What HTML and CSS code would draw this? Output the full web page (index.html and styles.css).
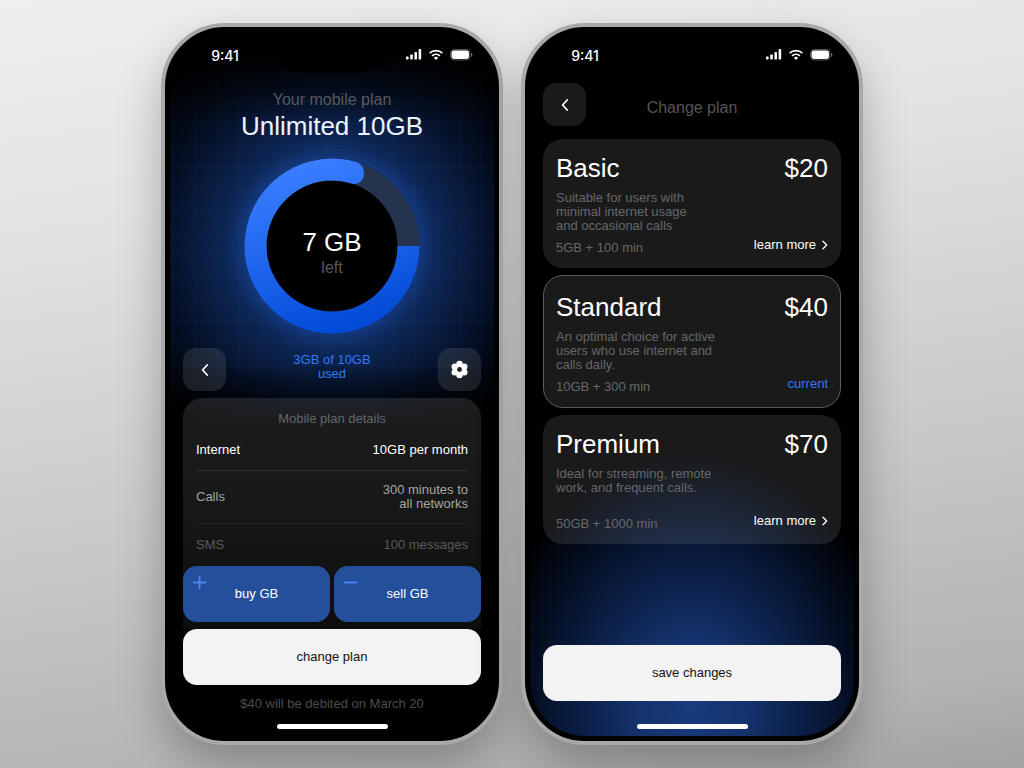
FILE: index.html
```html
<!doctype html>
<html lang="en">
<head>
    <meta charset="UTF-8">
    <meta name="viewport" content="width=device-width, initial-scale=1.0">
    <title>Mobile plan</title>
    <link rel="stylesheet" href="styles.css">
</head>
<body>

<svg class="sprite" aria-hidden="true">
    <symbol id="signal" viewBox="0 0 16 12">
        <rect x="0" y="7.500" width="2.600" height="3" rx=".8"/>
        <rect x="4.200" y="5.500" width="2.600" height="5" rx=".8"/>
        <rect x="8.400" y="3" width="2.600" height="7.500" rx=".8"/>
        <rect x="12.600" y="0" width="2.600" height="10.500" rx=".8"/>
    </symbol>
    <symbol id="wifi" viewBox="0 0 16 12">
        <path d="M1.600 4.200a9.300 9.300 0 0 1 12.800 0M4.100 6.800a5.700 5.700 0 0 1 7.800 0" fill="none" stroke="currentColor" stroke-width="1.700"/>
        <path d="M8 10.900L5.800 8.700a3.300 3.300 0 0 1 4.400 0z"/>
    </symbol>
    <symbol id="battery" viewBox="0 0 23 12">
        <rect x=".5" y=".5" width="19.500" height="10.500" rx="3.600" fill="none" stroke="currentColor" opacity=".35"/>
        <rect x="1.500" y="1.500" width="17.500" height="8.500" rx="2.400"/>
        <path d="M21 4v4c.8-.3 1.400-1.100 1.400-2s-.6-1.700-1.400-2z" opacity=".4"/>
    </symbol>
    <symbol id="chevron-left" viewBox="0 0 8 12">
        <path d="M6.200 1L1.600 6l4.600 5" fill="none" stroke="currentColor" stroke-width="1.700" stroke-linecap="round" stroke-linejoin="round"/>
    </symbol>
    <symbol id="chevron-right" viewBox="0 0 6 10">
        <path d="M1 1.300L4.700 5 1 8.700" fill="none" stroke="currentColor" stroke-width="1.300" stroke-linecap="round" stroke-linejoin="round"/>
    </symbol>
    <!-- six overlapping petals around a hub -->
    <symbol id="gear" viewBox="0 0 20 20">
        <circle cx="10" cy="10" r="6.500"/>
        <circle cx="10" cy="4.200" r="3.400"/>
        <circle cx="15" cy="7.100" r="3.400"/>
        <circle cx="15" cy="12.900" r="3.400"/>
        <circle cx="10" cy="15.800" r="3.400"/>
        <circle cx="5" cy="12.900" r="3.400"/>
        <circle cx="5" cy="7.100" r="3.400"/>
        <circle cx="10" cy="10" r="2.600" fill="#1c202a"/>
    </symbol>
</svg>

<main class="page">
    <section class="phone">
        <div class="screen screen-plan">
            <div class="status">
                <span class="time">9:41</span>
                <span class="island"></span>
                <span class="status-icons">
                    <svg width="16" height="12"><use href="#signal"/></svg>
                    <svg width="16" height="12"><use href="#wifi"/></svg>
                    <svg width="23" height="12"><use href="#battery"/></svg>
                </span>
            </div>

            <header class="plan-head">
                <p class="subtitle">Your mobile plan</p>
                <h1 class="title">Unlimited 10GB</h1>
            </header>

            <div class="usage">
                <svg class="ring" viewBox="0 0 176 176" aria-hidden="true">
                    <defs>
                        <linearGradient id="ring-fill" x1=".3" y1="0" x2=".6" y2="1">
                            <stop offset="0" stop-color="#3a80ff"/>
                            <stop offset=".45" stop-color="#2268f0"/>
                            <stop offset="1" stop-color="#0049d6"/>
                        </linearGradient>
                    </defs>
                    <circle cx="88" cy="88" r="76.5" fill="#000" stroke="#25334f" stroke-width="22"/>
                    <path d="M175.500 88A87.500 87.500 0 1 1 112 3.900C117.500 5.500 120 10 120 15C120 22 115 26.500 109 26A65.500 65.500 0 1 0 153.500 88Z" fill="url(#ring-fill)"/>
                </svg>
                <div class="usage-text">
                    <strong class="title">7 GB</strong>
                    <span class="subtitle">left</span>
                </div>
            </div>

            <div class="controls">
                <button class="icon-btn" aria-label="Back"><svg width="8" height="12"><use href="#chevron-left"/></svg></button>
                <p class="used">3GB of 10GB<br>used</p>
                <button class="icon-btn" aria-label="Settings"><svg width="19" height="19"><use href="#gear"/></svg></button>
            </div>

            <div class="details">
                <h2 class="details-title">Mobile plan details</h2>
                <dl class="details-list">
                    <div class="row">
                        <dt>Internet</dt>
                        <dd>10GB per month</dd>
                    </div>
                    <div class="row row-dim">
                        <dt>Calls</dt>
                        <dd>300 minutes to<br>all networks</dd>
                    </div>
                    <div class="row row-faint">
                        <dt>SMS</dt>
                        <dd>100 messages</dd>
                    </div>
                </dl>
                <div class="trade">
                    <button class="btn btn-blue">
                        <svg class="sign" viewBox="0 0 14 14"><path d="M7 0v14M0 7h14"/></svg>
                        buy GB
                    </button>
                    <button class="btn btn-blue">
                        <svg class="sign" viewBox="0 0 14 14"><path d="M0 7h14"/></svg>
                        sell GB
                    </button>
                </div>
            </div>

            <button class="btn btn-light">change plan</button>
            <p class="debit">$40 will be debited on March 20</p>
            <div class="home"></div>
        </div>
    </section>

    <section class="phone">
        <div class="screen screen-change">
            <div class="status">
                <span class="time">9:41</span>
                <span class="island"></span>
                <span class="status-icons">
                    <svg width="16" height="12"><use href="#signal"/></svg>
                    <svg width="16" height="12"><use href="#wifi"/></svg>
                    <svg width="23" height="12"><use href="#battery"/></svg>
                </span>
            </div>

            <header class="change-head">
                <button class="icon-btn" aria-label="Back"><svg width="8" height="12"><use href="#chevron-left"/></svg></button>
                <h1 class="subtitle">Change plan</h1>
            </header>

            <div class="cards">
                <article class="card">
                    <div class="card-top">
                        <h2 class="title">Basic</h2>
                        <span class="title">$20</span>
                    </div>
                    <p class="card-text">Suitable for users with<br>minimal internet usage<br>and occasional calls</p>
                    <div class="card-foot">
                        <span class="volume">5GB + 100 min</span>
                        <a class="more" href="#">learn more <svg width="6" height="10"><use href="#chevron-right"/></svg></a>
                    </div>
                </article>

                <article class="card card-current">
                    <div class="card-top">
                        <h2 class="title">Standard</h2>
                        <span class="title">$40</span>
                    </div>
                    <p class="card-text">An optimal choice for active<br>users who use internet and<br>calls daily.</p>
                    <div class="card-foot">
                        <span class="volume">10GB + 300 min</span>
                        <span class="current">current</span>
                    </div>
                </article>

                <article class="card">
                    <div class="card-top">
                        <h2 class="title">Premium</h2>
                        <span class="title">$70</span>
                    </div>
                    <p class="card-text">Ideal for streaming, remote<br>work, and frequent calls.</p>
                    <div class="card-foot">
                        <span class="volume">50GB + 1000 min</span>
                        <a class="more" href="#">learn more <svg width="6" height="10"><use href="#chevron-right"/></svg></a>
                    </div>
                </article>
            </div>

            <button class="btn btn-light btn-save">save changes</button>
            <div class="home"></div>
        </div>
    </section>
</main>

</body>
</html>
```
FILE: styles.css
```css
* {
    box-sizing: border-box;
    margin: 0;
    padding: 0;
}

body {
    font-family: "Liberation Sans", Arial, sans-serif;
    font-size: 13px;
    line-height: 14px;
    color: #fff;
    background: linear-gradient(172deg, #eeeff1 0%, #e2e3e5 25%, #cbcbcd 58%, #b2b2b2 90%, #a2a2a2 100%);
}

button {
    font: inherit;
    border: none;
    cursor: pointer;
}

svg {
    display: block;
    fill: currentColor;
}

.sprite {
    display: none;
}

.page {
    display: flex;
    justify-content: center;
    gap: 18px;
    min-height: 100vh;
    padding: 23px;
}

/* phone */

.phone {
    display: flex;
    flex: 1;
    max-width: 342px;
    padding: 5px;
    border: 4px solid #a9a9aa;
    border-radius: 64px;
    background: #000;
    box-shadow: 0 20px 44px rgba(0, 0, 0, .26);
}

.screen {
    display: flex;
    flex-direction: column;
    flex: 1;
    padding: 0 13px 7px;
    border-radius: 55px;
    background-color: #000;
}

.screen-plan {
    background-image:
        linear-gradient(#000 10px, transparent 90px, transparent 330px, #000 395px),
        linear-gradient(90deg, rgba(90, 140, 220, .05) 1px, transparent 1px),
        linear-gradient(rgba(90, 140, 220, .05) 1px, transparent 1px),
        radial-gradient(circle at 50% 214px, #143676 85px, #0e2857 104px, #0a1d42 130px, #05122b 160px, #020813 195px, #000 240px);
    background-size: auto, 22px 22px, 22px 22px, auto;
    background-position: 0 0, 3px 3px, 3px 3px, 0 0;
}

.screen-change {
    background-image: radial-gradient(ellipse 210px 260px at 50% 96%, #183b7c 0, #14316a 28%, #0a1d42 55%, #040d1f 78%, #01040a 92%, #000 100%);
}

.status {
    display: grid;
    grid-template-columns: 1fr 104px 1fr;
    align-items: center;
    justify-items: center;
    height: 48px;
    margin: 0 -13px;
}

.time {
    font-family: Inter, sans-serif;
    font-size: 14px;
    font-weight: 500;
}

.island {
    width: 104px;
    height: 30px;
    border-radius: 15px;
    background: #000;
}

.status-icons {
    display: flex;
    gap: 6px;
    padding-bottom: 3px;
}

.home {
    width: 111px;
    height: 5px;
    margin: auto auto 0;
    border-radius: 3px;
    background: #fff;
}

/* common */

.title {
    font-size: 26px;
    font-weight: 400;
    line-height: 32px;
}

.subtitle {
    font-size: 16px;
    font-weight: 400;
    line-height: 20px;
    color: #58595d;
}

.icon-btn {
    display: flex;
    align-items: center;
    justify-content: center;
    width: 43px;
    height: 43px;
    border-radius: 13px;
    color: #fff;
    background: rgba(255, 255, 255, .1);
}

.btn {
    height: 56px;
    border-radius: 14px;
}

.btn-light {
    color: #111;
    background: #f3f3f3;
}

.btn-blue {
    position: relative;
    color: #fff;
    background: #24509b;
}

.sign {
    position: absolute;
    top: 10px;
    left: 10px;
    width: 13px;
    height: 13px;
    stroke: #4786f0;
    stroke-width: 2;
}

/* plan screen */

.plan-head {
    padding-top: 10px;
    text-align: center;
}

.plan-head .title {
    color: #eef4ff;
}

.usage {
    display: grid;
    place-items: center;
    margin-top: 16px;
}

.ring,
.usage-text {
    grid-area: 1 / 1;
}

.ring {
    width: 176px;
    height: 176px;
    border-radius: 50%;
    box-shadow: 0 0 28px rgba(28, 92, 220, .22);
}

.usage-text {
    display: flex;
    flex-direction: column;
    align-items: center;
    padding-top: 12px;
}

.controls {
    display: flex;
    align-items: center;
    justify-content: space-between;
    margin-top: 14px;
}

.used {
    padding-bottom: 6px;
    text-align: center;
    color: #3478f6;
}

.details {
    margin-top: 7px;
    padding: 12px 0 7px;
    border-radius: 20px 20px 0 0;
    background: linear-gradient(rgba(255, 255, 255, .11), rgba(255, 255, 255, .09) 50%, rgba(255, 255, 255, .05));
}

.details-title {
    margin-bottom: 3px;
    font-size: 13px;
    font-weight: 400;
    line-height: 17px;
    text-align: center;
    color: #66676b;
}

.details-list {
    padding: 0 13px 1px;
}

.row {
    display: flex;
    align-items: center;
    justify-content: space-between;
    min-height: 41px;
    padding: 12px 0;
    border-bottom: 1px solid #303030;
    text-align: right;
}

.row-dim {
    border-color: #252525;
    color: #a6a6a6;
}

.row-faint {
    border: none;
    color: #5a5a5a;
}

.trade {
    display: grid;
    grid-template-columns: 1fr 1fr;
    gap: 4px;
}

.debit {
    margin-top: 12px;
    text-align: center;
    color: #4c4c4c;
}

/* change screen */

.change-head {
    display: grid;
    grid-template-columns: 43px 1fr 43px;
    align-items: center;
    margin: 3px 0 13px;
}

.change-head .subtitle {
    padding-top: 6px;
    text-align: center;
    color: #555;
}

.cards {
    display: flex;
    flex-direction: column;
    gap: 7px;
}

.card {
    display: flex;
    flex-direction: column;
    min-height: 129px;
    padding: 13px;
    border-radius: 20px;
    background: rgba(255, 255, 255, .1);
}

.card-current {
    padding: 15px 12px 13px;
    border: 1px solid #5c5c5c;
}

.card-top {
    display: flex;
    justify-content: space-between;
}

.card-text {
    margin: 7px 0 5px;
    color: #66676a;
}

.card-foot {
    display: flex;
    justify-content: space-between;
    height: 17px;
    margin-top: auto;
}

.volume {
    align-self: flex-end;
    color: #66676a;
}

.more {
    display: flex;
    align-items: center;
    align-self: flex-start;
    gap: 6px;
    color: #fff;
    text-decoration: none;
}

.current {
    color: #3478f6;
}

.btn-save {
    margin: auto 0 23px;
}

.btn-save + .home {
    margin-top: 0;
}
```
